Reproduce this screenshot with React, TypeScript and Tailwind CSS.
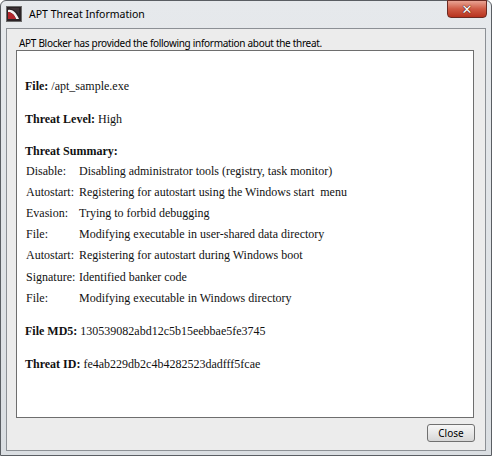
import React from "react";

const rows: [string, string][] = [
  ["Disable:", "Disabling administrator tools (registry, task monitor)"],
  ["Autostart:", "Registering for autostart using the Windows start  menu"],
  ["Evasion:", "Trying to forbid debugging"],
  ["File:", "Modifying executable in user-shared data directory"],
  ["Autostart:", "Registering for autostart during Windows boot"],
  ["Signature:", "Identified banker code"],
  ["File:", "Modifying executable in Windows directory"],
];

function AppIcon() {
  return (
    <svg width="16" height="16" viewBox="0 0 16 16">
      <rect x="0.5" y="0.5" width="15" height="15" fill="#2b2326" stroke="#6a6a6a" />
      <path d="M2 4 C6 3 10 6 13 13 L10 13 C8 8 5 6 2 6 Z" fill="#f4f1f1" />
      <path d="M2 6 C5 6 8 8 10 13 L2 13 Z" fill="#b3262c" />
      <path d="M3 2 L13 2 L13 9 C11 5 7 3 3 2 Z" fill="#3d3236" />
    </svg>
  );
}

export default function App() {
  const sans = { fontFamily: '"Noto Sans", "Open Sans", sans-serif' };
  const serif = { fontFamily: '"Liberation Serif", "Times New Roman", serif' };
  return (
    <div className="w-[493px] h-[459px] bg-white">
      <div className="w-[492px] h-[456px] border border-[#5a5e63] rounded-t-[6px] bg-gradient-to-b from-[#e6e9ec] to-[#dadee2] flex flex-col">
        {/* title bar */}
        <div className="h-[27px] flex items-start relative">
          <div className="mt-[5px] ml-[5px]">
            <AppIcon />
          </div>
          <div className="ml-[7px] mt-[5px] text-[10.5px] leading-[16px] text-black" style={sans}>
            APT Threat Information
          </div>
          <div className="absolute right-[4px] top-[-1px] w-[40px] h-[18px] rounded-b-[4px] border border-[#6b2a22] bg-gradient-to-b from-[#e8a393] via-[#cf5a44] to-[#b7321d] flex items-center justify-center">
            <span className="text-white font-bold text-[13px] leading-none" style={{ fontFamily: '"DejaVu Sans", sans-serif', textShadow: "0 0 1px #3a0c06, 0 0 1px #3a0c06" }}>
              ✕
            </span>
          </div>
        </div>
        {/* content */}
        <div className="flex-1 mx-[5px] mb-[4px] border border-[#8c9095] bg-[#ececec] flex flex-col">
          <div className="h-[21px] pl-[12px] pt-[6px] text-[10px] tracking-[-0.3px] leading-[16px] text-black" style={sans}>
            APT Blocker has provided the following information about the threat.
          </div>
          <div className="ml-[9px] mr-[11px] h-[368px] border border-[#6e6e6e] bg-white text-[12px] text-[#111] pl-[8px]" style={serif}>
            <div className="mt-[27px] leading-[16px]">
              <span className="font-bold">File:</span> /apt_sample.exe
            </div>
            <div className="mt-[17px] leading-[16px]">
              <span className="font-bold">Threat Level:</span> High
            </div>
            <div className="mt-[16px] leading-[16px] font-bold">Threat Summary:</div>
            <div className="mt-[1px] pl-[1px]">
              {rows.map(([k, v], i) => (
                <div key={i} className="h-[21.2px] flex items-center">
                  <span className="w-[53px] shrink-0">{k}</span>
                  <span className="whitespace-pre">{v}</span>
                </div>
              ))}
            </div>
            <div className="mt-[15px] leading-[16px]">
              <span className="font-bold">File MD5:</span> 130539082abd12c5b15eebbae5fe3745
            </div>
            <div className="mt-[17px] leading-[16px]">
              <span className="font-bold">Threat ID:</span> fe4ab229db2c4b4282523dadfff5fcae
            </div>
          </div>
          <div className="flex justify-end mr-[10px] mt-[6px]">
            <div className="w-[48px] h-[18px] rounded-[3px] border border-[#707070] bg-gradient-to-b from-[#f6f6f6] via-[#e8e8e8] to-[#d6d6d6] flex items-center justify-center text-[10px] text-black" style={sans}>
              Close
            </div>
          </div>
        </div>
      </div>
    </div>
  );
}
